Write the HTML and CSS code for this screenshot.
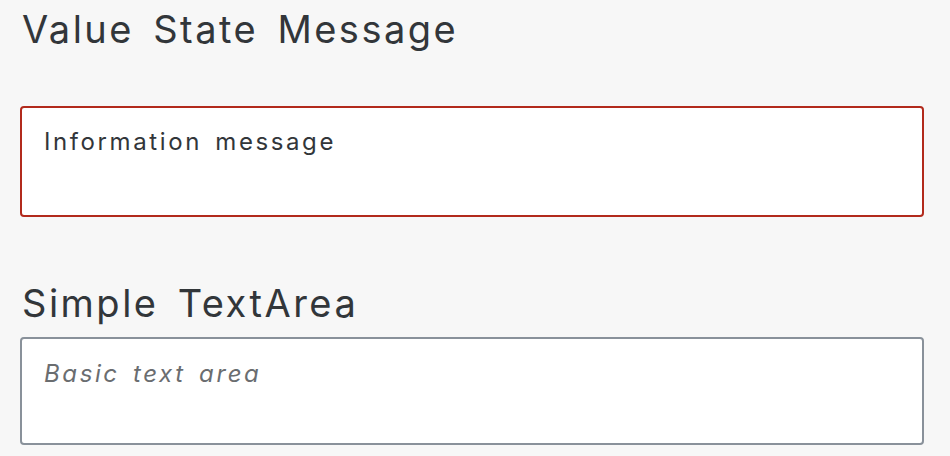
FILE: index.html
```html
<!DOCTYPE html>
<html>
<head>
    <meta charset="utf-8" />
    <title>TextArea</title>
    <link rel="stylesheet" href="styles.css">
</head>
<body>
    <div class="page">
        <h2 class="title">Value State Message</h2>
        <textarea class="area area-error">Information message</textarea>

        <h2 class="title title2">Simple TextArea</h2>
        <textarea class="area area-simple" placeholder="Basic text area"></textarea>
    </div>
</body>
</html>
```

FILE: styles.css
```css
* {
    font-family: Inter, "Liberation Sans", sans-serif;
    box-sizing: border-box;
}

body {
    margin: 0;
    background: #f7f7f7;
    color: #32363a;
}

.page {
    padding: 0 26px 0 20px;
}

.title {
    margin: 0;
    padding: 5px 0 0 2px;
    font-size: 38px;
    font-weight: 400;
    letter-spacing: 2.5px;
    word-spacing: 6px;
    line-height: 48px;
}

.title2 {
    padding-top: 0;
    margin-top: 62px;
    margin-bottom: 10px;
}

.area {
    display: block;
    width: 100%;
    height: 111px;
    margin: 0;
    padding: 19px 22px;
    background: #fff;
    border: 2px solid #89919a;
    border-radius: 4px;
    font-size: 24px;
    letter-spacing: 2.6px;
    word-spacing: 4px;
    color: #32363a;
    resize: none;
    outline: none;
}

.area-error {
    margin-top: 53px;
    border-color: #b22a1c;
}

.area-simple {
    height: 108px;
    padding-top: 20px;
}

.area::placeholder {
    color: #6a6d70;
    font-style: italic;
}
```
